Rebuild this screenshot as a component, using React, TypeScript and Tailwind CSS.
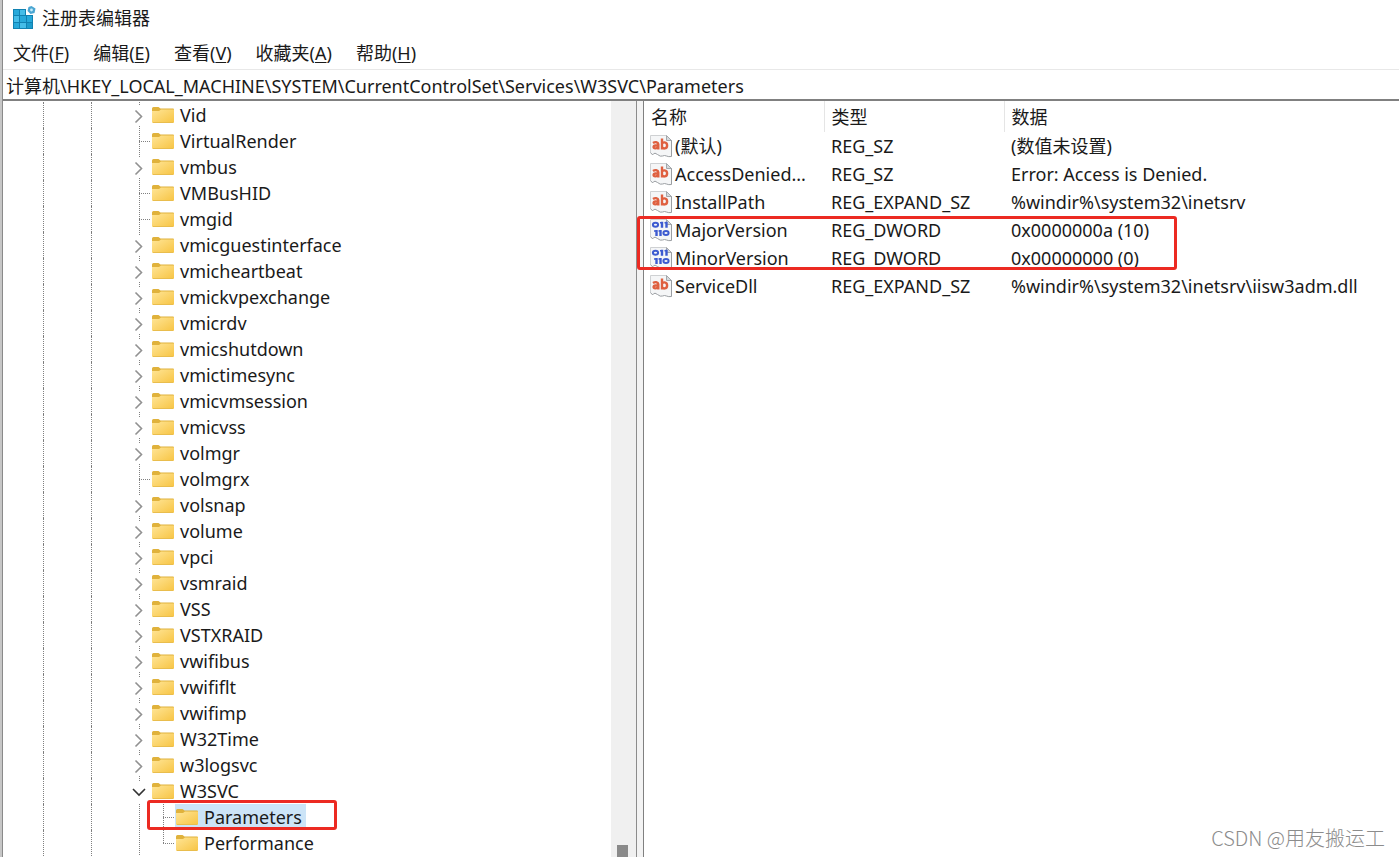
import React, { useState } from 'react';

interface TreeNode {
  name: string;
  state: 'closed' | 'open' | 'leaf';
  child?: boolean;
  last?: boolean;
}

interface RegistryValue {
  name: string;
  kind: 'string' | 'binary';
  type: string;
  data: string;
}

const MENUS = [
  { label: '文件', key: 'F' },
  { label: '编辑', key: 'E' },
  { label: '查看', key: 'V' },
  { label: '收藏夹', key: 'A' },
  { label: '帮助', key: 'H' },
];

const NODES: TreeNode[] = [
  { name: 'Vid', state: 'closed' },
  { name: 'VirtualRender', state: 'leaf' },
  { name: 'vmbus', state: 'closed' },
  { name: 'VMBusHID', state: 'leaf' },
  { name: 'vmgid', state: 'leaf' },
  { name: 'vmicguestinterface', state: 'closed' },
  { name: 'vmicheartbeat', state: 'closed' },
  { name: 'vmickvpexchange', state: 'closed' },
  { name: 'vmicrdv', state: 'closed' },
  { name: 'vmicshutdown', state: 'closed' },
  { name: 'vmictimesync', state: 'closed' },
  { name: 'vmicvmsession', state: 'closed' },
  { name: 'vmicvss', state: 'closed' },
  { name: 'volmgr', state: 'closed' },
  { name: 'volmgrx', state: 'leaf' },
  { name: 'volsnap', state: 'closed' },
  { name: 'volume', state: 'closed' },
  { name: 'vpci', state: 'closed' },
  { name: 'vsmraid', state: 'closed' },
  { name: 'VSS', state: 'closed' },
  { name: 'VSTXRAID', state: 'closed' },
  { name: 'vwifibus', state: 'closed' },
  { name: 'vwififlt', state: 'closed' },
  { name: 'vwifimp', state: 'closed' },
  { name: 'W32Time', state: 'closed' },
  { name: 'w3logsvc', state: 'closed' },
  { name: 'W3SVC', state: 'open' },
  { name: 'Parameters', state: 'leaf', child: true },
  { name: 'Performance', state: 'leaf', child: true, last: true },
];

const VALUES: RegistryValue[] = [
  { name: '(默认)', kind: 'string', type: 'REG_SZ', data: '(数值未设置)' },
  { name: 'AccessDenied...', kind: 'string', type: 'REG_SZ', data: 'Error: Access is Denied.' },
  { name: 'InstallPath', kind: 'string', type: 'REG_EXPAND_SZ', data: '%windir%\\system32\\inetsrv' },
  { name: 'MajorVersion', kind: 'binary', type: 'REG_DWORD', data: '0x0000000a (10)' },
  { name: 'MinorVersion', kind: 'binary', type: 'REG_DWORD', data: '0x00000000 (0)' },
  { name: 'ServiceDll', kind: 'string', type: 'REG_EXPAND_SZ', data: '%windir%\\system32\\inetsrv\\iisw3adm.dll' },
];

const AppIcon = () => (
  <svg width="24" height="24" viewBox="0 0 24 24" className="shrink-0">
    <path d="M1 3h13v6h7v14H1z" fill="#1182b2" />
    <path d="M2 4h5v5H2zM8 10h6v6H8zM15 10h5v6h-5zM2 17h5v5H2z" fill="#27a9da" />
    <path d="M8 4h5v5H8zM2 10h5v6H2zM8 17h6v5H8z" fill="#45bde8" />
    <path d="M15 17h5v5h-5z" fill="#1c9ccc" />
    <path d="M19.500 0l4 2.500-1 4.500-4 1-3-3 1-4z" fill="#4ba6d2" />
    <circle cx="19.500" cy="4" r="1.400" fill="#c9ecfa" />
  </svg>
);

const FolderIcon = () => (
  <svg width="22" height="18" viewBox="0 0 22 18" className="shrink-0">
    <defs>
      <linearGradient id="folder" x1="0" y1="0" x2="1" y2="1">
        <stop offset="0" stopColor="#ffe596" />
        <stop offset="1" stopColor="#f7c443" />
      </linearGradient>
    </defs>
    <path d="M0 2.500q0-1.500 1.500-1.500h5l2 1.500h12.500q1 0 1 1v5H0z" fill="#e0b23c" />
    <path d="M0 5h7l2-1.500h13v12.500q0 1-1 1H1q-1 0-1-1z" fill="url(#folder)" />
    <path d="M1 16.500h20" stroke="#e9bd4d" />
  </svg>
);

// Torn sheet of paper behind both value icons
const Sheet = () => (
  <>
    <path d="M1.500 1.500h16l5 5v16q-3 .5-5-.500t-4 0-5-1.500-4-.500-3-1.500z" fill="#f5f6f7" />
    <path d="M1.500 18.500v-17h16" fill="none" stroke="#cfd1d3" />
    <path d="M22.500 6v16.500q-3 .5-5-.500t-4 0-5-1.500-4-.500-3-1.500" fill="none" stroke="#9a9ea2" />
    <path d="M17.500 1.500v5h5z" fill="#d5d9dc" stroke="#a4a8ac" />
  </>
);

const StringIcon = () => (
  <svg width="24" height="24" viewBox="0 0 24 24" className="shrink-0">
    <Sheet />
    <g fill="none" stroke="#df6040" strokeWidth="2.400">
      <path d="M4 9q1.500-1 3.300-.8t2 2v5.300M9.300 11.500H6.600q-2 .2-2 1.500t1.700 1.400q2.700 0 3-2" />
      <path d="M13 4.500v11M13 9.500q1-1.300 2.600-1.100 2.500.3 2.500 3t-2.500 3q-1.600.2-2.600-1.200" />
    </g>
  </svg>
);

const BinaryIcon = () => (
  <svg width="24" height="24" viewBox="0 0 24 24" className="shrink-0">
    <Sheet />
    <g fill="none" stroke="#3d5bd0" strokeWidth="2">
      <ellipse cx="6.500" cy="6.800" rx="2.600" ry="2" />
      <path d="M13 3.800v6M17.500 3.800v6" strokeWidth="2.400" />
      <path d="M11 4.800h2M15.500 4.800h2" strokeWidth="1.500" />
      <path d="M7.500 12v6M11.500 12v6" strokeWidth="2.400" />
      <path d="M5 13h2.500M9.500 13h2" strokeWidth="1.500" />
      <ellipse cx="17" cy="15" rx="2.600" ry="2" />
    </g>
  </svg>
);

// One 24px tree cell: the dotted branch line, with a chevron on top when the key has subkeys
const Branch = ({ state, last }: { state: TreeNode['state'] | 'line'; last?: boolean }) => (
  <svg width="24" height="26" viewBox="0 0 24 26" className="shrink-0" fill="none">
    <g stroke="#808080" strokeDasharray="1 1">
      {(state === 'leaf' || state === 'line') && <path d={last ? 'M12.500 0v14' : 'M12.500 0v26'} />}
      {state === 'leaf' && <path d="M12 13.500h11" />}
      {state === 'closed' && <path d="M12.500 0v3M12.500 24v2" />}
      {state === 'open' && <path d="M12.500 0v3" />}
    </g>
    {state === 'closed' && <path d="M8.500 8.500l6 6-6 6" stroke="#919191" strokeWidth="1.600" />}
    {state === 'open' && <path d="M6 11l6 6 6-6" stroke="#333333" strokeWidth="1.600" />}
  </svg>
);

const TreeRow = ({ node, selected, onSelect }: { node: TreeNode; selected: boolean; onSelect: () => void }) => (
  <li className="relative flex h-[26px] items-center pl-10">
    <span className="h-full w-12 shrink-0 border-l border-dotted border-[#808080]" />
    <span className="h-full w-9 shrink-0 border-l border-dotted border-[#808080]" />
    {node.child && <Branch state="line" />}
    <Branch state={node.state} last={node.last} />
    <button
      type="button"
      onClick={onSelect}
      className={`flex h-full items-center gap-1.5 pr-1 pl-px whitespace-nowrap ${selected ? 'bg-[#cce4f7]' : ''}`}
    >
      <FolderIcon />
      {node.name}
    </button>
    {node.name === 'Parameters' && (
      <span className="pointer-events-none absolute -top-1 left-36 h-[30px] w-[190px] rounded-[3px] border-3 border-[#ec2a22]" />
    )}
  </li>
);

const App: React.FC = () => {
  const [selected, setSelected] = useState('Parameters');
  const [path, setPath] = useState('计算机\\HKEY_LOCAL_MACHINE\\SYSTEM\\CurrentControlSet\\Services\\W3SVC\\Parameters');

  return (
    <div className="relative flex h-screen overflow-hidden bg-white font-['Noto_Sans','Noto_Sans_CJK_SC',sans-serif] text-[18px] leading-[26px] text-[#1a1a1a]">
      <div className="w-[3px] shrink-0 border-r border-[#8a8a8a] bg-[#c6c6c6]" />

      <div className="flex min-w-0 flex-1 flex-col">
        <header className="flex h-9 shrink-0 items-center gap-1.5 pl-[9px]">
          <AppIcon />
          <h1>注册表编辑器</h1>
        </header>

        <nav className="flex h-[34px] shrink-0 items-center gap-6 border-b border-[#e8e8e8] pl-2.5">
          {MENUS.map((m) => (
            <button key={m.key} type="button" className="whitespace-nowrap">
              {m.label}(<u className="underline-offset-2">{m.key}</u>)
            </button>
          ))}
        </nav>

        <input
          aria-label="地址"
          value={path}
          onChange={(e) => setPath(e.target.value)}
          className="h-[31px] w-full shrink-0 border-b-2 border-[#808080] pl-[3px] outline-none"
        />

        <div className="flex min-h-0 flex-1">
          <div className="flex w-[634px] shrink-0 overflow-hidden border-r border-[#8c8c8c]">
            <ul className="min-w-0 flex-1 pt-px">
              {NODES.map((n) => (
                <TreeRow key={n.name} node={n} selected={selected === n.name} onSelect={() => setSelected(n.name)} />
              ))}
            </ul>
            <div className="flex w-[25px] shrink-0 flex-col justify-end bg-[#f0f0f0] pl-1.5">
              <div className="h-3 w-[11px] bg-[#8a8a8a]" />
            </div>
          </div>
          <div className="w-1.5 shrink-0 bg-[#f3f3f3]" />

          <main className="relative min-w-0 flex-1 border-l border-[#808080]">
            <table className="w-full table-fixed border-collapse text-left whitespace-nowrap">
              <colgroup>
                <col className="w-[180px]" />
                <col className="w-[180px]" />
                <col />
              </colgroup>
              <thead>
                <tr className="h-[31px]">
                  <th className="border-r border-[#e5e5e5] p-0 pl-[7px] font-normal">名称</th>
                  <th className="border-r border-[#e5e5e5] p-0 pl-[7px] font-normal">类型</th>
                  <th className="p-0 pl-[7px] font-normal">数据</th>
                </tr>
              </thead>
              <tbody>
                {VALUES.map((v) => (
                  <tr key={v.name} className="h-7">
                    <td className="p-0 pl-[5px]">
                      <div className="flex items-center gap-0.5">
                        {v.kind === 'string' ? <StringIcon /> : <BinaryIcon />}
                        {v.name}
                      </div>
                    </td>
                    <td className="p-0 pl-[7px]">{v.type}</td>
                    <td className="p-0 pl-[7px]">{v.data}</td>
                  </tr>
                ))}
              </tbody>
            </table>
            <span className="pointer-events-none absolute top-[115px] -left-[7px] h-[54px] w-[540px] rounded-[3px] border-3 border-[#ec2a22]" />
          </main>
        </div>
      </div>

      <p className="absolute right-3.5 bottom-1.5 font-['Noto_Sans_CJK_SC',sans-serif] text-[20px] font-light text-[#8c8c8c]">
        CSDN @用友搬运工
      </p>
    </div>
  );
};

export default App;
